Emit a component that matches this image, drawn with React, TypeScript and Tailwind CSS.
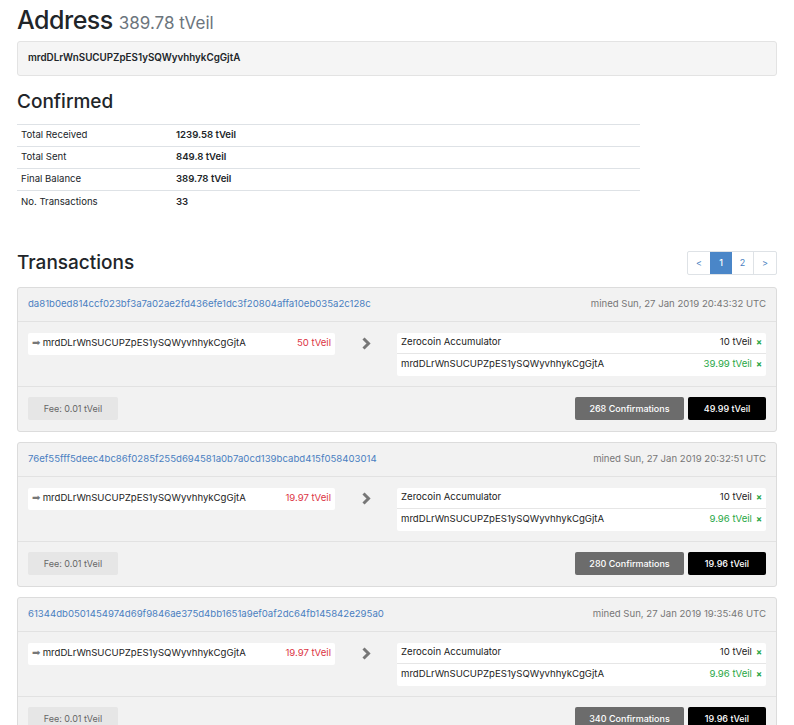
import React from "react";

type Tx = {
  hash: string;
  time: string;
  inAmount: string;
  outAmount: string;
  confirmations: string;
  total: string;
};

const ADDR = "mrdDLrWnSUCUPZpES1ySQWyvhhykCgGjtA";

const txs: Tx[] = [
  {
    hash: "da81b0ed814ccf023bf3a7a02ae2fd436efe1dc3f20804affa10eb035a2c128c",
    time: "mined Sun, 27 Jan 2019 20:43:32 UTC",
    inAmount: "50 tVeil",
    outAmount: "39.99 tVeil",
    confirmations: "268 Confirmations",
    total: "49.99 tVeil",
  },
  {
    hash: "76ef55fff5deec4bc86f0285f255d694581a0b7a0cd139bcabd415f058403014",
    time: "mined Sun, 27 Jan 2019 20:32:51 UTC",
    inAmount: "19.97 tVeil",
    outAmount: "9.96 tVeil",
    confirmations: "280 Confirmations",
    total: "19.96 tVeil",
  },
  {
    hash: "61344db0501454974d69f9846ae375d4bb1651a9ef0af2dc64fb145842e295a0",
    time: "mined Sun, 27 Jan 2019 19:35:46 UTC",
    inAmount: "19.97 tVeil",
    outAmount: "9.96 tVeil",
    confirmations: "340 Confirmations",
    total: "19.96 tVeil",
  },
];

const stats = [
  ["Total Received", "1239.58 tVeil"],
  ["Total Sent", "849.8 tVeil"],
  ["Final Balance", "389.78 tVeil"],
  ["No. Transactions", "33"],
];

function Check() {
  return <span className="ml-[4px] text-[9px] font-bold text-[#28a745]">×</span>;
}

function TxCard({ tx }: { tx: Tx }) {
  return (
    <div className="mb-[10px] rounded-[3px] border border-[#dcdcdc] bg-[#f2f2f2]">
      <div className="flex h-[34px] items-center justify-between border-b border-[#e2e2e2] px-[10px] text-[9.6px]">
        <span className="text-[#4a7fc1]">{tx.hash}</span>
        <span className="text-[#777]">{tx.time}</span>
      </div>
      <div className="flex h-[65px] items-start border-b border-[#e2e2e2] px-[10px] pt-[11px] text-[9.6px] text-[#222]">
        <div className="flex h-[22px] w-[307px] items-center justify-between rounded-[2px] bg-white px-[4px]">
          <span>
            <span className="text-[#777]">➡</span> {ADDR}
          </span>
          <span className="text-[#dc3545]">{tx.inAmount}</span>
        </div>
        <div className="flex h-[22px] w-[62px] items-center justify-center">
          <svg width="9" height="13" viewBox="0 0 9 13">
            <path d="M1.5 1.5 L6.5 6.5 L1.5 11.5" fill="none" stroke="#777" strokeWidth="3" />
          </svg>
        </div>
        <div className="flex-1 rounded-[2px] bg-white">
          <div className="flex h-[21px] items-center justify-between border-b border-[#e6e6e6] px-[4px]">
            <span>Zerocoin Accumulator</span>
            <span>
              10 tVeil
              <Check />
            </span>
          </div>
          <div className="flex h-[22px] items-center justify-between px-[4px]">
            <span>{ADDR}</span>
            <span className="text-[#28a745]">
              {tx.outAmount}
              <Check />
            </span>
          </div>
        </div>
      </div>
      <div className="flex h-[44px] items-center justify-between px-[10px] text-[9px]">
        <span className="flex h-[23px] w-[90px] items-center justify-center rounded-[2px] bg-[#e6e6e6] text-[#666]">
          Fee: 0.01 tVeil
        </span>
        <div className="flex gap-[4px]">
          <span className="flex h-[23px] w-[109px] items-center justify-center rounded-[2px] bg-[#6c6c6c] font-medium text-white">
            {tx.confirmations}
          </span>
          <span className="flex h-[23px] w-[78px] items-center justify-center rounded-[2px] bg-black font-medium text-white">
            {tx.total}
          </span>
        </div>
      </div>
    </div>
  );
}

export default function App() {
  return (
    <div className="min-h-screen bg-white font-['Inter',sans-serif] text-[#212529]">
      <div className="px-[17px]">
        <h1 className="flex items-baseline gap-[6px] pt-[4px] text-[25px] font-medium leading-[32px] tracking-[-0.5px]">
          Address
          <span className="text-[17px] font-normal tracking-normal text-[#6c757d]">389.78 tVeil</span>
        </h1>
        <div className="mt-[2px] flex h-[35px] items-center rounded-[3px] border border-[#e3e3e3] bg-[#f5f5f5] px-[10px] text-[9.8px] font-semibold">
          {ADDR}
        </div>

        <h2 className="mt-[14px] text-[19px] font-medium leading-[24px]">Confirmed</h2>
        <table className="mt-[10px] w-[623px] border-collapse text-[9.6px]">
          <tbody>
            {stats.map(([k, v]) => (
              <tr key={k} className="h-[22px] border-t border-[#dee2e6]">
                <td className="w-[155px] px-[4px]">{k}</td>
                <td className="px-[4px] font-semibold">{v}</td>
              </tr>
            ))}
          </tbody>
        </table>

        <div className="mt-[38px] flex items-center justify-between">
          <h2 className="text-[19px] font-medium leading-[24px]">Transactions</h2>
          <div className="flex h-[24px] overflow-hidden rounded-[2px] border border-[#dee2e6] text-[9px]">
            <span className="flex w-[22px] items-center justify-center text-[#4a7fc1]">&lt;</span>
            <span className="flex w-[22px] items-center justify-center bg-[#4a86c8] font-medium text-white">1</span>
            <span className="flex w-[22px] items-center justify-center border-r border-[#dee2e6] text-[#4a7fc1]">2</span>
            <span className="flex w-[22px] items-center justify-center text-[#4a7fc1]">&gt;</span>
          </div>
        </div>

        <div className="mt-[12px]">
          {txs.map((tx) => (
            <TxCard key={tx.hash} tx={tx} />
          ))}
        </div>
      </div>
    </div>
  );
}
